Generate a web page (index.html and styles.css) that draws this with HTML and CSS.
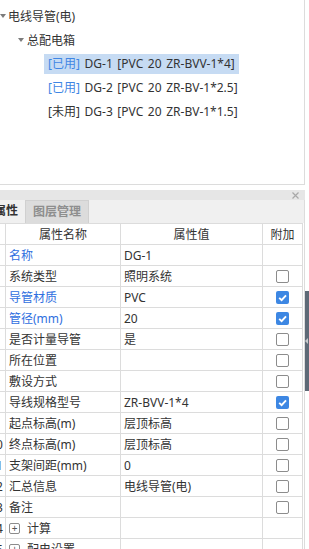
FILE: index.html
```html
<!DOCTYPE html>
<html lang="zh-CN">
<head>
<meta charset="utf-8">
<title>属性</title>
<link rel="stylesheet" href="styles.css">
</head>
<body>
<div class="tree">
  <div class="node l0"><span class="caret"></span><span class="label">电线导管(电)</span></div>
  <div class="node l1"><span class="caret"></span><span class="label">总配电箱</span></div>
  <div class="node l2"><span class="label sel"><span class="used">[已用]</span> DG-1 [PVC 20 ZR-BVV-1*4]</span></div>
  <div class="node l2"><span class="label"><span class="used">[已用]</span> DG-2 [PVC 20 ZR-BV-1*2.5]</span></div>
  <div class="node l2"><span class="label">[未用] DG-3 [PVC 20 ZR-BV-1*1.5]</span></div>
</div>

<div class="panel">
  <div class="panel-head">
    <svg class="close" width="7" height="7" viewBox="0 0 7 7"><path d="M0.5 0.5 L6.5 6.5 M6.5 0.5 L0.5 6.5" stroke="#a8a8a8" stroke-width="1.2" fill="none"/></svg>
  </div>
  <div class="panel-row">
    <div class="panel-body">
      <div class="tabs">
        <div class="tab active">属性</div>
        <div class="tab inactive">图层管理</div>
      </div>
      <div class="grid">
        <div class="c num"></div><div class="c head">属性名称</div><div class="c head">属性值</div><div class="c head">附加</div>

        <div class="c num">1</div><div class="c name blue">名称</div><div class="c val">DG-1</div><div class="c chk"></div>
        <div class="c num">2</div><div class="c name">系统类型</div><div class="c val">照明系统</div><div class="c chk"><span class="box"></span></div>
        <div class="c num">3</div><div class="c name blue">导管材质</div><div class="c val">PVC</div><div class="c chk"><span class="box on"><svg width="13" height="13" viewBox="0 0 13 13"><path d="M3.2 6.9 L5.6 9.2 L10 4.3" stroke="#fff" stroke-width="1.9" fill="none"/></svg></span></div>
        <div class="c num">4</div><div class="c name blue">管径(mm)</div><div class="c val">20</div><div class="c chk"><span class="box on"><svg width="13" height="13" viewBox="0 0 13 13"><path d="M3.2 6.9 L5.6 9.2 L10 4.3" stroke="#fff" stroke-width="1.9" fill="none"/></svg></span></div>
        <div class="c num">5</div><div class="c name">是否计量导管</div><div class="c val">是</div><div class="c chk"><span class="box"></span></div>
        <div class="c num">6</div><div class="c name">所在位置</div><div class="c val"></div><div class="c chk"><span class="box"></span></div>
        <div class="c num">7</div><div class="c name">敷设方式</div><div class="c val"></div><div class="c chk"><span class="box"></span></div>
        <div class="c num">8</div><div class="c name">导线规格型号</div><div class="c val">ZR-BVV-1*4</div><div class="c chk"><span class="box on"><svg width="13" height="13" viewBox="0 0 13 13"><path d="M3.2 6.9 L5.6 9.2 L10 4.3" stroke="#fff" stroke-width="1.9" fill="none"/></svg></span></div>
        <div class="c num">9</div><div class="c name">起点标高(m)</div><div class="c val">层顶标高</div><div class="c chk"><span class="box"></span></div>
        <div class="c num">10</div><div class="c name">终点标高(m)</div><div class="c val">层顶标高</div><div class="c chk"><span class="box"></span></div>
        <div class="c num">11</div><div class="c name">支架间距(mm)</div><div class="c val">0</div><div class="c chk"><span class="box"></span></div>
        <div class="c num">12</div><div class="c name">汇总信息</div><div class="c val">电线导管(电)</div><div class="c chk"><span class="box"></span></div>
        <div class="c num">13</div><div class="c name">备注</div><div class="c val"></div><div class="c chk"><span class="box"></span></div>
        <div class="c num">14</div><div class="c name"><span class="exp">+</span>计算</div><div class="c val"></div><div class="c chk"></div>
        <div class="c num">15</div><div class="c name"><span class="exp">+</span>配电设置</div><div class="c val"></div><div class="c chk"></div>
      </div>
    </div>
    <div class="track"><div class="thumb"></div></div>
  </div>
</div>
</body>
</html>
```

FILE: styles.css
```css
html, body {
  margin: 0;
  padding: 0;
  background: #fff;
}
body {
  width: 309px;
  height: 549px;
  overflow: hidden;
  font-family: "Noto Sans", "Noto Sans CJK SC", sans-serif;
  font-size: 12px;
  color: #333;
}

/* ---------- tree ---------- */
.tree {
  width: 304px;
  height: 180px;
  padding-top: 4px;
  border-right: 1px solid #dcdcdc;
  border-bottom: 1px solid #dcdcdc;
}
.node {
  height: 24px;
  display: flex;
  align-items: center;
  white-space: nowrap;
}
.l0 { padding-left: 0; }
.l1 { padding-left: 18px; }
.l2 { padding-left: 44px; }
.caret {
  width: 0;
  height: 0;
  border-left: 3px solid transparent;
  border-right: 3px solid transparent;
  border-top: 4px solid #7c7c7c;
  margin-right: 2px;
  margin-top: -1px;
}
.l1 .caret { margin-right: 3px; }
.l2 .label {
  height: 20px;
  line-height: 20px;
  padding: 0 4px;
  word-spacing: 1.5px;
}
.sel { background: #c6dbf3; }
.used { color: #3f86e4; }

/* ---------- panel ---------- */
.panel { margin-top: 5px; }
.panel-head {
  width: 305px;
  height: 10px;
  background: #e6e6e6;
  display: flex;
  justify-content: flex-end;
  align-items: center;
}
.close { margin-right: 6px; }

.panel-row { display: flex; }
.panel-body {
  width: 304px;
  border-right: 1px solid #dcdcdc;
  overflow: hidden;
}
.track { width: 4px; }
.thumb {
  position: relative;
  margin-top: 91px;
  height: 100px;
  background: #5e6a77;
}
.thumb::before {
  content: "";
  position: absolute;
  left: 0;
  top: 47px;
  border-top: 3px solid transparent;
  border-bottom: 3px solid transparent;
  border-right: 3px solid #c6c9cc;
}

.tabs {
  height: 23px;
  background: #f0f0f0;
  display: flex;
  margin-left: -13px;
}
.tab {
  padding: 0 7px;
  font-weight: bold;
  line-height: 22px;
  white-space: nowrap;
}
.tab.active { color: #333; }
.tab.inactive {
  background: #dcdcdc;
  color: #8e8e8e;
  border: 1px solid #d0d0d0;
  border-bottom: none;
  height: 22px;
}

.grid {
  display: grid;
  grid-template-columns: 18px 114px 141px 39px;
  grid-auto-rows: 20px;
  gap: 1px;
  width: max-content;
  margin-left: -13px;
  background: #dcdcdc;
  border-top: 1px solid #dcdcdc;
  border-right: 1px solid #dcdcdc;
}
.c {
  background: #fff;
  display: flex;
  align-items: center;
  white-space: nowrap;
  overflow: hidden;
}
.num { justify-content: center; color: #333; }
.head { justify-content: center; color: #333; }
.name { padding-left: 3px; }
.val { padding-left: 3px; }
.blue { color: #2f6fe0; }
.chk { justify-content: center; }
.box {
  width: 11px;
  height: 11px;
  border: 1px solid #8c8c8c;
  border-radius: 2px;
  background: #fff;
  display: block;
}
.box.on {
  width: 13px;
  height: 13px;
  border: none;
  background: #3d87e3;
}
.box.on svg { display: block; }
.exp {
  width: 9px;
  height: 9px;
  border: 1px solid #8c8c8c;
  border-radius: 2px;
  margin: 0 7px 0 0;
  display: flex;
  align-items: center;
  justify-content: center;
  font-size: 10px;
  line-height: 9px;
  color: #555;
}
```
